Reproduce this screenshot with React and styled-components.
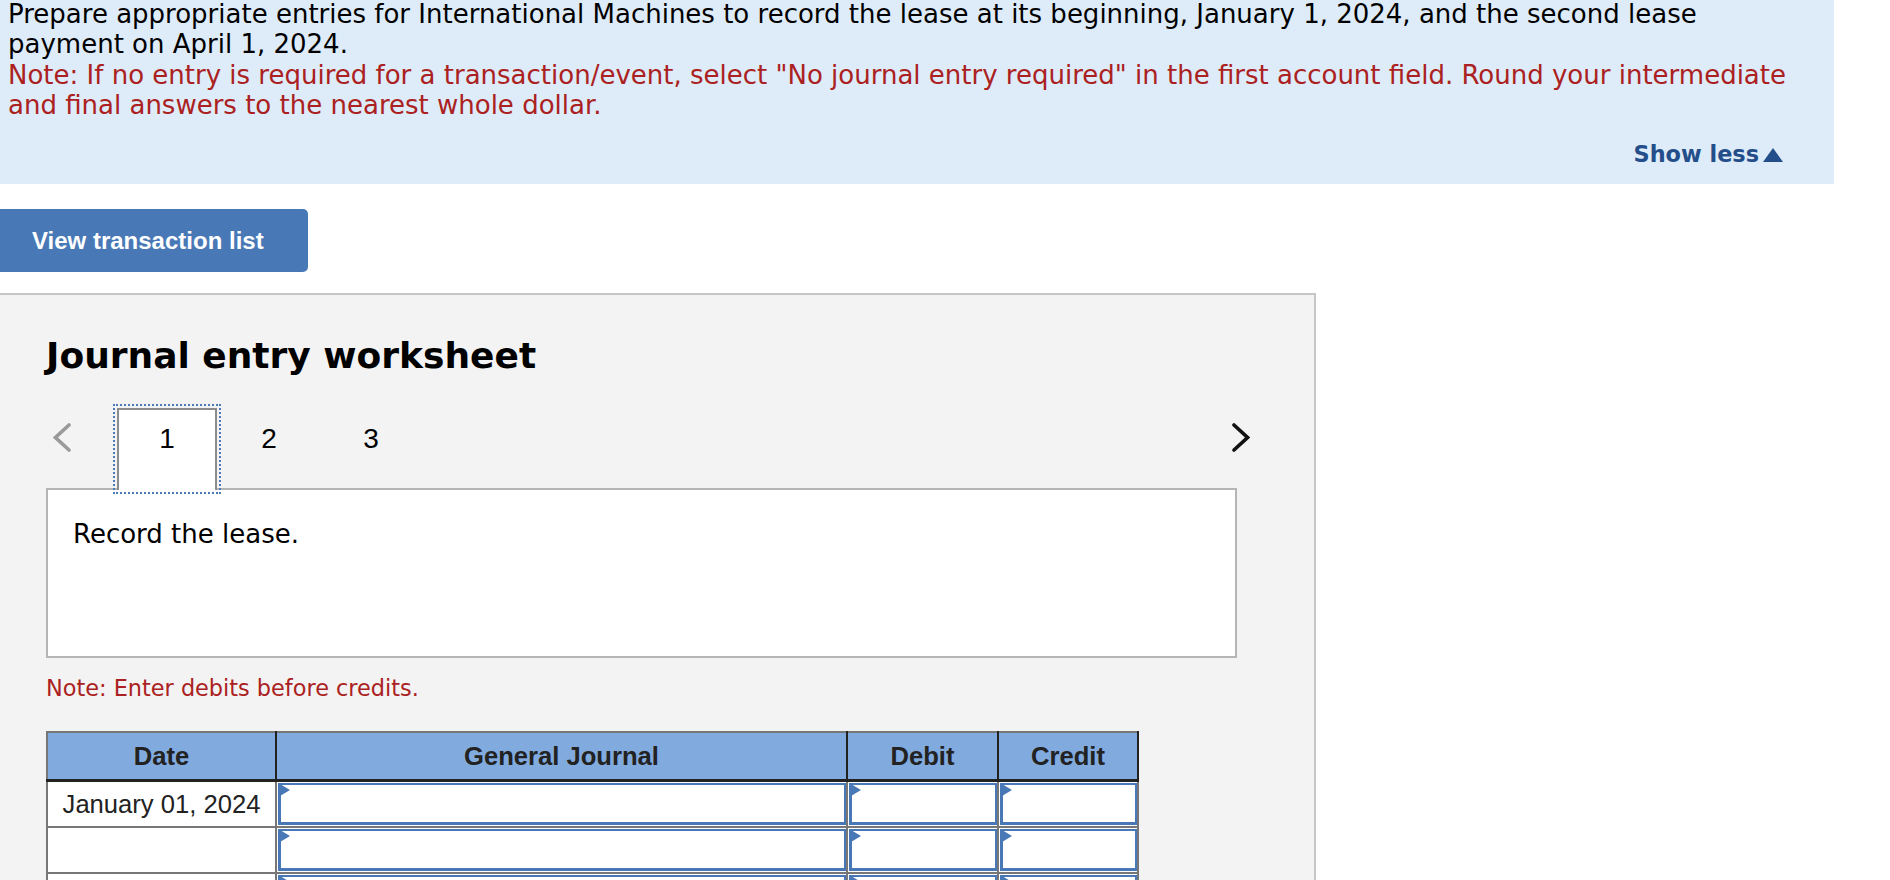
import styled, { createGlobalStyle } from 'styled-components';

const GlobalStyle = createGlobalStyle`
  html, body {
    margin: 0;
    padding: 0;
    background: #fff;
    overflow: hidden;
  }
  body {
    font-family: 'DejaVu Sans', Verdana, sans-serif;
  }
`;

const rows = [
  { date: 'January 01, 2024' },
  { date: '' },
  { date: '' },
];

const Chevron = ({ dir, color }) => (
  <svg width="18" height="29" viewBox="0 0 18 29" fill="none">
    <polyline
      points={dir === 'left' ? '16,2 2.5,14.5 16,27' : '2,2 15.5,14.5 2,27'}
      stroke={color}
      strokeWidth="3.6"
      strokeLinecap="round"
      strokeLinejoin="miter"
    />
  </svg>
);

const App = () => {
  return (
    <>
      <GlobalStyle />
      <Prompt>
        <PromptText>
          Prepare appropriate entries for International Machines to record the lease at its
          beginning, January 1, 2024, and the second lease payment on April 1, 2024.
        </PromptText>
        <PromptText $note>
          Note: If no entry is required for a transaction/event, select "No journal entry
          required" in the first account field. Round your intermediate and final answers to
          the nearest whole dollar.
        </PromptText>
        <ShowLessRow>
          <ShowLess>
            Show less
            <Caret />
          </ShowLess>
        </ShowLessRow>
      </Prompt>

      <ListButton type="button">View transaction list</ListButton>

      <Worksheet>
        <Heading>Journal entry worksheet</Heading>

        <NavRow>
          <ArrowButton type="button" $side="left">
            <Chevron dir="left" color="#9a9a9a" />
          </ArrowButton>
          <Tabs>
            <Tab $active>1</Tab>
            <Tab>2</Tab>
            <Tab>3</Tab>
          </Tabs>
          <ArrowButton type="button" $side="right">
            <Chevron dir="right" color="#111" />
          </ArrowButton>
        </NavRow>

        <EntryBox>Record the lease.</EntryBox>

        <DebitNote>Note: Enter debits before credits.</DebitNote>

        <Journal>
          <thead>
            <tr>
              <HeadCell $w={227}>Date</HeadCell>
              <HeadCell $w={569}>General Journal</HeadCell>
              <HeadCell $w={149}>Debit</HeadCell>
              <HeadCell $w={138}>Credit</HeadCell>
            </tr>
          </thead>
          <tbody>
            {rows.map((row, i) => (
              <tr key={i}>
                <DateCell>{row.date}</DateCell>
                <InputCell>
                  <Field />
                </InputCell>
                <InputCell>
                  <Field />
                </InputCell>
                <InputCell>
                  <Field />
                </InputCell>
              </tr>
            ))}
          </tbody>
        </Journal>
      </Worksheet>
    </>
  );
};

export default App;

const Prompt = styled.section`
  width: 1834px;
  height: 184px;
  box-sizing: border-box;
  padding: 0 20px 0 8px;
  background: #deebf8;
  font-size: 26px;
  line-height: 30.3px;
  overflow: hidden;
`;

const PromptText = styled.p`
  margin: ${(p) => (p.$note ? '0' : '-1px 0 0')};
  color: ${(p) => (p.$note ? '#ab2121' : '#000')};
`;

const ShowLessRow = styled.div`
  display: flex;
  justify-content: flex-end;
  margin-top: 19px;
  padding-right: 31px;
  line-height: 30px;
`;

const ShowLess = styled.a`
  font-weight: bold;
  font-size: 22.4px;
  color: #234e8a;
  cursor: pointer;
`;

const Caret = styled.span`
  display: inline-block;
  width: 0;
  height: 0;
  margin-left: 4px;
  border-left: 10px solid transparent;
  border-right: 10px solid transparent;
  border-bottom: 14px solid #234e8a;
`;

const ListButton = styled.button`
  display: block;
  margin: 25px 0 0;
  width: 308px;
  height: 63px;
  padding: 0 0 0 32px;
  border: none;
  border-radius: 0 5px 5px 0;
  background: #4878b6;
  color: #fff;
  text-align: left;
  font-family: 'Liberation Sans', Arial, sans-serif;
  font-weight: bold;
  font-size: 24px;
  cursor: pointer;
`;

const Worksheet = styled.section`
  margin-top: 21px;
  width: 1316px;
  min-height: 620px;
  box-sizing: border-box;
  padding: 0 0 40px 46px;
  border: 2px solid #c6c6c6;
  border-left: none;
  background: #f3f3f3;
`;

const Heading = styled.h2`
  margin: 40px 0 31px;
  font-size: 36px;
  line-height: 42px;
  font-weight: bold;
  color: #000;
`;

const NavRow = styled.div`
  display: flex;
  align-items: flex-start;
  width: 1204px;
  margin-bottom: -2px;
`;

const ArrowButton = styled.button`
  display: flex;
  justify-content: ${(p) => (p.$side === 'left' ? 'flex-start' : 'flex-end')};
  width: ${(p) => (p.$side === 'left' ? '71px' : '40px')};
  margin-left: ${(p) => (p.$side === 'left' ? '0' : 'auto')};
  margin-top: 15px;
  padding: 0 0 0 ${(p) => (p.$side === 'left' ? '7px' : '0')};
  border: none;
  background: none;
  cursor: pointer;
`;

const Tabs = styled.div`
  display: flex;
  gap: 2px;
`;

const Tab = styled.div`
  position: relative;
  z-index: 1;
  width: 100px;
  height: 82px;
  box-sizing: border-box;
  padding-top: 13px;
  border: 2px solid ${(p) => (p.$active ? '#8c8c8c' : 'transparent')};
  border-bottom: none;
  background: ${(p) => (p.$active ? '#fff' : 'transparent')};
  outline: ${(p) => (p.$active ? '2px dotted #4a7ab8' : 'none')};
  outline-offset: 2px;
  text-align: center;
  font-family: 'Liberation Sans', Arial, sans-serif;
  font-size: 28px;
  line-height: 32px;
  color: #000;
  cursor: pointer;
`;

const EntryBox = styled.div`
  width: 1191px;
  height: 170px;
  box-sizing: border-box;
  padding: 29px 25px;
  border: 2px solid #b5b5b5;
  background: #fff;
  font-size: 26px;
  color: #000;
`;

const DebitNote = styled.p`
  margin: 17px 0 30px;
  font-size: 22.4px;
  color: #ab2121;
`;

const Journal = styled.table`
  width: 1083px;
  border-collapse: collapse;
  table-layout: fixed;
  border: 2px solid #777;
  font-family: 'Liberation Sans', Arial, sans-serif;
  font-size: 25.6px;
  color: #222;
`;

const HeadCell = styled.th`
  width: ${(p) => p.$w}px;
  height: 46px;
  padding: 0;
  background: #81abdf;
  border-right: 2px solid #222;
  border-bottom: 3px solid #222;
  font-weight: bold;
  text-align: center;
`;

const DateCell = styled.td`
  height: 43px;
  padding: 0;
  border: 2px solid #777;
  background: #fff;
  text-align: center;
`;

const InputCell = styled.td`
  height: 43px;
  padding: 1px 0 0 1px;
  border: 2px solid #777;
  background: #fff;
  vertical-align: top;
`;

const Field = styled.div`
  position: relative;
  height: 42px;
  box-sizing: border-box;
  border: 2px solid #4878b6;
  border-left-width: 3px;
  border-bottom-width: 3px;
  background: #fff;

  &::before {
    content: '';
    position: absolute;
    top: -1px;
    left: -1px;
    border-top: 6px solid transparent;
    border-bottom: 6px solid transparent;
    border-left: 10px solid #4878b6;
  }
`;
